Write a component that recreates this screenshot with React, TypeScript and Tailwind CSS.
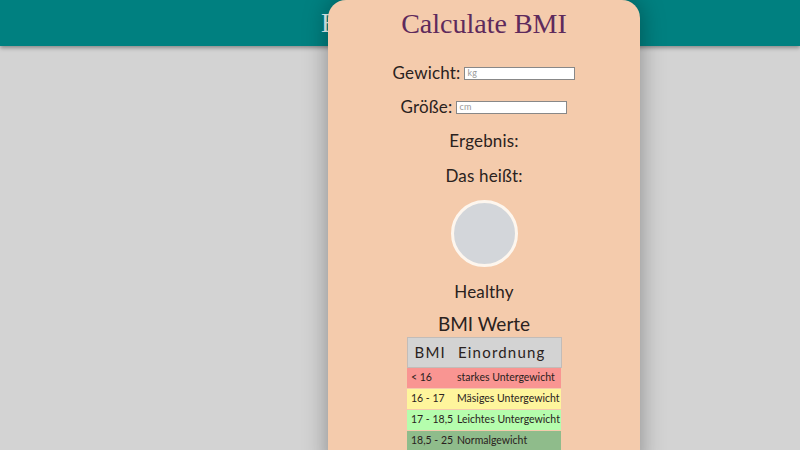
export default function App() {
  const rows = [
    { bmi: '< 16', label: 'starkes Untergewicht', bg: 'bg-[#f99592]' },
    { bmi: '16 - 17', label: 'Mäsiges Untergewicht', bg: 'bg-[#fef59c]' },
    { bmi: '17 - 18,5', label: 'Leichtes Untergewicht', bg: 'bg-[#b5fdad]' },
    { bmi: '18,5 - 25', label: 'Normalgewicht', bg: 'bg-[#8fbc8b]' },
  ]

  return (
    <div className="relative h-[450px] w-[800px] overflow-hidden bg-[#d3d3d3] font-['Lato','Noto_Sans',sans-serif] text-[#2a2220]">
      <header className="h-[46px] bg-[#008080] shadow-[0_2px_4px_rgba(0,0,0,0.35)] flex items-center pl-[321px]">
        <h1 className="font-['Liberation_Serif',serif] text-[27px] text-[#e6f7f7] leading-none">BMI Rechner</h1>
      </header>

      <main className="absolute left-[328px] top-0 w-[312px] h-[470px] rounded-t-[18px] bg-[#f4cbac] shadow-[0_0_24px_rgba(0,0,0,0.35)] flex flex-col items-center">
        <h2 className="mt-[8px] font-['Liberation_Serif',serif] text-[28px] leading-[32px] text-[#5e2a5c]">Calculate BMI</h2>

        <label className="mt-[23px] flex items-center gap-[4px] text-[17px] leading-[20px] tracking-[0.01em]">
          Gewicht:
          <input
            placeholder="kg"
            className="w-[111px] h-[13px] border border-[#888] bg-white px-[2px] text-[9px] placeholder:text-[#999] outline-none"
          />
        </label>

        <label className="mt-[14px] flex items-center gap-[4px] text-[17px] leading-[20px] tracking-[0.01em]">
          Größe:
          <input
            placeholder="cm"
            className="w-[111px] h-[13px] border border-[#888] bg-white px-[2px] text-[9px] placeholder:text-[#999] outline-none"
          />
        </label>

        <p className="mt-[14px] text-[17px] leading-[20px] tracking-[0.01em]">Ergebnis:</p>
        <p className="mt-[15px] text-[17px] leading-[20px] tracking-[0.01em]">Das heißt:</p>

        <div className="mt-[14px] w-[67px] h-[67px] rounded-full border-[3px] border-[#fdf6ee] bg-[#d3d6da]" />

        <p className="mt-[15px] text-[17px] leading-[20px] tracking-[0.01em]">Healthy</p>

        <h3 className="mt-[11px] text-[19px] leading-[22px]">BMI Werte</h3>

        <table className="mt-[2px] w-[154px] table-fixed border-collapse text-[10.5px]">
          <colgroup>
            <col className="w-[46px]" />
            <col className="w-[108px]" />
          </colgroup>
          <thead>
            <tr className="bg-[#d3d3d3] border border-[#c2bcb8] h-[30px]">
              <th className="pl-[7px] text-left font-normal text-[15px] tracking-[0.08em]">BMI</th>
              <th className="pl-[5px] text-left font-normal text-[15px] tracking-[0.08em] whitespace-nowrap">Einordnung</th>
            </tr>
          </thead>
          <tbody>
            {rows.map((r) => (
              <tr key={r.bmi} className={`${r.bg} h-[21px] border-b border-[#f4cbac]`}>
                <td className="pl-[4px] whitespace-nowrap">{r.bmi}</td>
                <td className="pl-[4px] whitespace-nowrap">{r.label}</td>
              </tr>
            ))}
          </tbody>
        </table>
      </main>
    </div>
  )
}
